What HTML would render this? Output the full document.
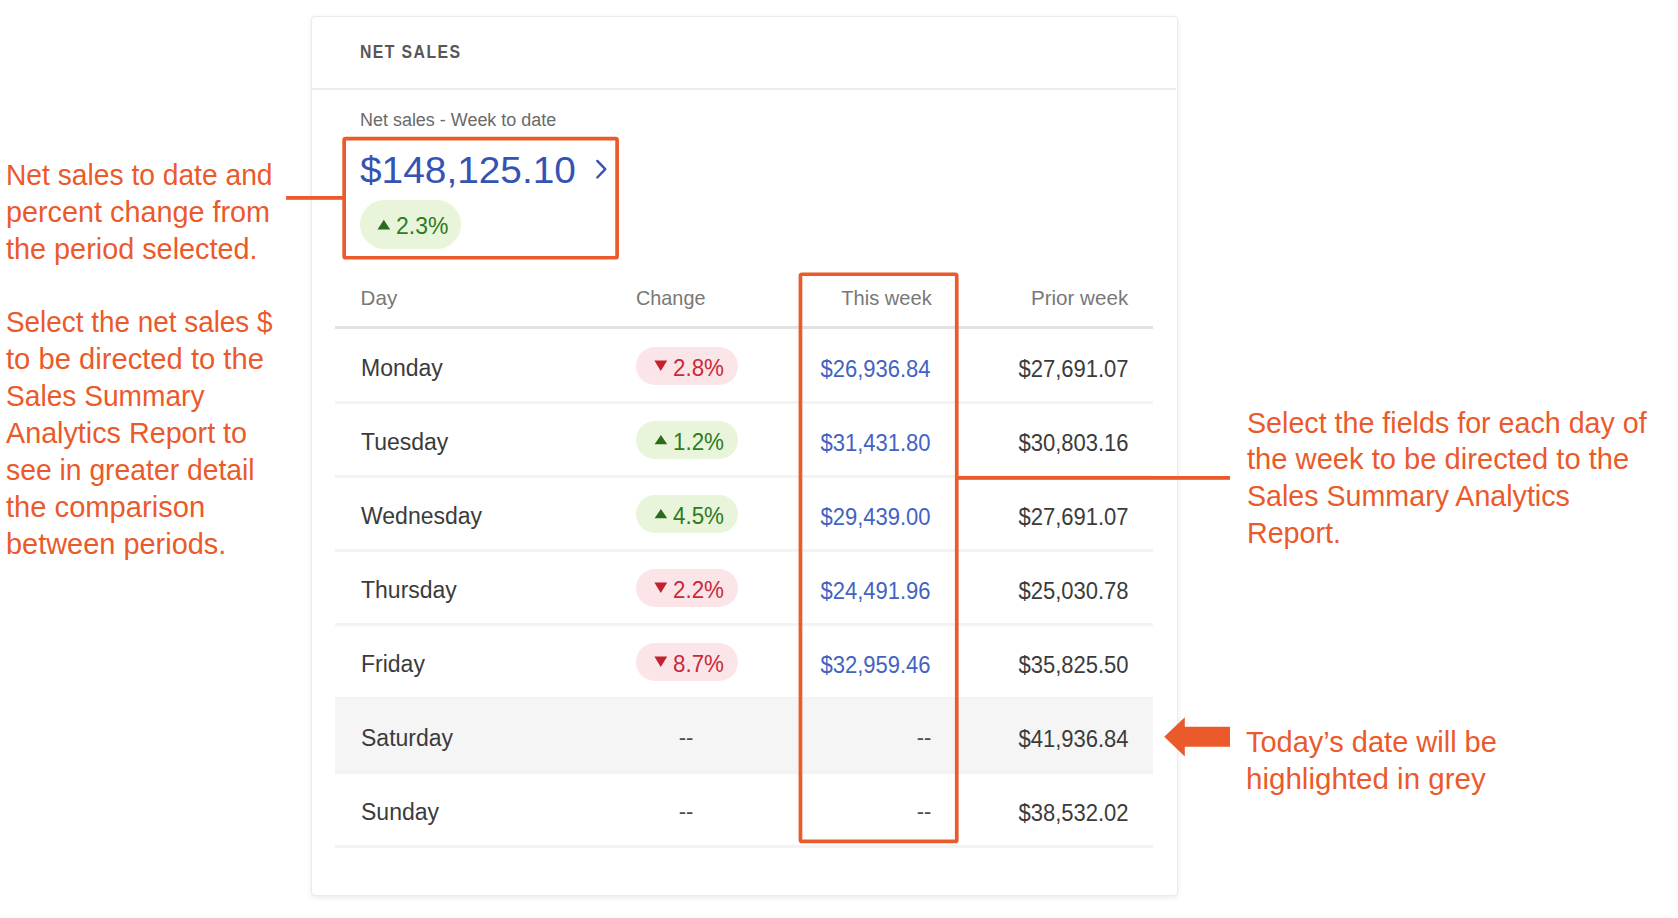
<!DOCTYPE html>
<html><head><meta charset="utf-8"><style>
html,body{margin:0;padding:0;background:#fff;}
body{width:1678px;height:918px;position:relative;overflow:hidden;font-family:"Liberation Sans",sans-serif;}
.t{position:absolute;white-space:nowrap;}
</style></head><body>
<div style="position:absolute;left:310.5px;top:15.5px;width:867px;height:880px;box-sizing:border-box;border:1px solid #ebebeb;border-radius:4px;background:#fff;box-shadow:0 1.5px 5px rgba(0,0,0,0.08);"></div>
<div style="position:absolute;left:312px;top:87.5px;width:864px;height:2px;background:#ececec;"></div>
<div class="t" style="top:42.31px;font-size:18px;line-height:20.106px;color:#575757;font-weight:700;letter-spacing:1.6px;left:359.60px;transform:scaleX(0.8780101951133765);transform-origin:0 0;">NET SALES</div>
<div class="t" style="top:109.61px;font-size:18px;line-height:20.106px;color:#6a6a6a;left:359.50px;transform:scaleX(0.997255260750229);transform-origin:0 0;">Net sales - Week to date</div>
<div class="t" style="top:149.64px;font-size:37.3px;line-height:41.664px;color:#3553b3;left:359.60px;transform:scaleX(1.0410438405307925);transform-origin:0 0;">$148,125.10</div>
<div style="position:absolute;left:359.5px;top:199.5px;width:101px;height:49.5px;background:#e9f5da;border-radius:25px;"></div>
<svg style="position:absolute;left:377px;top:219px" width="14" height="11" viewBox="0 0 14 11"><path d="M0.5 10.5 L6.8 0.8 L13.2 10.5 Z" fill="#2a6b1c"/></svg>
<div class="t" style="top:211.70px;font-size:24.2px;line-height:27.031px;color:#2f7a22;left:395.50px;transform:scaleX(0.9496882702624326);transform-origin:0 0;">2.3%</div>
<div class="t" style="top:286.46px;font-size:20.6px;line-height:23.010px;color:#787878;left:360.60px;">Day</div>
<div class="t" style="top:286.46px;font-size:20.6px;line-height:23.010px;color:#787878;left:635.50px;transform:scaleX(0.9625638823871584);transform-origin:0 0;">Change</div>
<div class="t" style="top:286.46px;font-size:20.6px;line-height:23.010px;color:#787878;right:746.20px;text-align:right;transform:scaleX(0.975);transform-origin:100% 0;">This week</div>
<div class="t" style="top:286.46px;font-size:20.6px;line-height:23.010px;color:#787878;right:549.80px;text-align:right;">Prior week</div>
<div style="position:absolute;left:335px;top:326px;width:818px;height:3px;background:#e2e2e2;"></div>
<div style="position:absolute;left:335px;top:401px;width:818px;height:3px;background:#f3f3f3;"></div>
<div class="t" style="top:355.99px;font-size:23px;line-height:25.691px;color:#3b3b3b;left:361.00px;">Monday</div>
<div style="position:absolute;left:636px;top:347.4px;width:102px;height:37.6px;background:#fbe5e8;border-radius:19px;"></div>
<svg style="position:absolute;left:654px;top:360px" width="14" height="12" viewBox="0 0 14 12"><path d="M0.4 0.6 L13.2 0.6 L6.8 10.9 Z" fill="#c4202e"/></svg>
<div class="t" style="top:354.51px;font-size:23.3px;line-height:26.026px;color:#c92a38;left:673.30px;transform:scaleX(0.9600180709283939);transform-origin:0 0;">2.8%</div>
<div class="t" style="top:355.71px;font-size:23.3px;line-height:26.026px;color:#4363c2;right:747.20px;text-align:right;transform:scaleX(0.945);transform-origin:100% 0;">$26,936.84</div>
<div class="t" style="top:355.71px;font-size:23.3px;line-height:26.026px;color:#3b3b3b;right:549.90px;text-align:right;transform:scaleX(0.945);transform-origin:100% 0;">$27,691.07</div>
<div style="position:absolute;left:335px;top:475px;width:818px;height:3px;background:#f3f3f3;"></div>
<div class="t" style="top:430.04px;font-size:23px;line-height:25.691px;color:#3b3b3b;left:361.00px;">Tuesday</div>
<div style="position:absolute;left:636px;top:421.4px;width:102px;height:37.6px;background:#e9f5da;border-radius:19px;"></div>
<svg style="position:absolute;left:654px;top:434px" width="14" height="12" viewBox="0 0 14 12"><path d="M0.6 10.3 L6.9 0.9 L13.2 10.3 Z" fill="#2a6b1c"/></svg>
<div class="t" style="top:428.56px;font-size:23.3px;line-height:26.026px;color:#2f7a22;left:673.30px;transform:scaleX(0.9600180709283939);transform-origin:0 0;">1.2%</div>
<div class="t" style="top:429.76px;font-size:23.3px;line-height:26.026px;color:#4363c2;right:747.20px;text-align:right;transform:scaleX(0.945);transform-origin:100% 0;">$31,431.80</div>
<div class="t" style="top:429.76px;font-size:23.3px;line-height:26.026px;color:#3b3b3b;right:549.90px;text-align:right;transform:scaleX(0.945);transform-origin:100% 0;">$30,803.16</div>
<div style="position:absolute;left:335px;top:549px;width:818px;height:3px;background:#f3f3f3;"></div>
<div class="t" style="top:504.08px;font-size:23px;line-height:25.691px;color:#3b3b3b;left:361.00px;">Wednesday</div>
<div style="position:absolute;left:636px;top:495.4px;width:102px;height:37.6px;background:#e9f5da;border-radius:19px;"></div>
<svg style="position:absolute;left:654px;top:508px" width="14" height="12" viewBox="0 0 14 12"><path d="M0.6 10.3 L6.9 0.9 L13.2 10.3 Z" fill="#2a6b1c"/></svg>
<div class="t" style="top:502.61px;font-size:23.3px;line-height:26.026px;color:#2f7a22;left:673.30px;transform:scaleX(0.9600180709283939);transform-origin:0 0;">4.5%</div>
<div class="t" style="top:503.81px;font-size:23.3px;line-height:26.026px;color:#4363c2;right:747.20px;text-align:right;transform:scaleX(0.945);transform-origin:100% 0;">$29,439.00</div>
<div class="t" style="top:503.81px;font-size:23.3px;line-height:26.026px;color:#3b3b3b;right:549.90px;text-align:right;transform:scaleX(0.945);transform-origin:100% 0;">$27,691.07</div>
<div style="position:absolute;left:335px;top:623px;width:818px;height:3px;background:#f3f3f3;"></div>
<div class="t" style="top:578.13px;font-size:23px;line-height:25.691px;color:#3b3b3b;left:361.00px;">Thursday</div>
<div style="position:absolute;left:636px;top:569.4px;width:102px;height:37.6px;background:#fbe5e8;border-radius:19px;"></div>
<svg style="position:absolute;left:654px;top:582px" width="14" height="12" viewBox="0 0 14 12"><path d="M0.4 0.6 L13.2 0.6 L6.8 10.9 Z" fill="#c4202e"/></svg>
<div class="t" style="top:576.66px;font-size:23.3px;line-height:26.026px;color:#c92a38;left:673.30px;transform:scaleX(0.9600180709283939);transform-origin:0 0;">2.2%</div>
<div class="t" style="top:577.86px;font-size:23.3px;line-height:26.026px;color:#4363c2;right:747.20px;text-align:right;transform:scaleX(0.945);transform-origin:100% 0;">$24,491.96</div>
<div class="t" style="top:577.86px;font-size:23.3px;line-height:26.026px;color:#3b3b3b;right:549.90px;text-align:right;transform:scaleX(0.945);transform-origin:100% 0;">$25,030.78</div>
<div style="position:absolute;left:335px;top:697px;width:818px;height:3px;background:#f3f3f3;"></div>
<div class="t" style="top:652.18px;font-size:23px;line-height:25.691px;color:#3b3b3b;left:361.00px;">Friday</div>
<div style="position:absolute;left:636px;top:643.4px;width:102px;height:37.6px;background:#fbe5e8;border-radius:19px;"></div>
<svg style="position:absolute;left:654px;top:656px" width="14" height="12" viewBox="0 0 14 12"><path d="M0.4 0.6 L13.2 0.6 L6.8 10.9 Z" fill="#c4202e"/></svg>
<div class="t" style="top:650.71px;font-size:23.3px;line-height:26.026px;color:#c92a38;left:673.30px;transform:scaleX(0.9600180709283939);transform-origin:0 0;">8.7%</div>
<div class="t" style="top:651.91px;font-size:23.3px;line-height:26.026px;color:#4363c2;right:747.20px;text-align:right;transform:scaleX(0.945);transform-origin:100% 0;">$32,959.46</div>
<div class="t" style="top:651.91px;font-size:23.3px;line-height:26.026px;color:#3b3b3b;right:549.90px;text-align:right;transform:scaleX(0.945);transform-origin:100% 0;">$35,825.50</div>
<div style="position:absolute;left:335px;top:698.5px;width:818px;height:74px;background:#f5f5f5;"></div>
<div style="position:absolute;left:335px;top:771px;width:818px;height:3px;background:#f3f3f3;"></div>
<div class="t" style="top:726.23px;font-size:23px;line-height:25.691px;color:#3b3b3b;left:361.00px;">Saturday</div>
<div class="t" style="top:725.94px;font-size:22px;line-height:24.574px;color:#4a4a4a;left:486.00px;width:400px;text-align:center;">--</div>
<div class="t" style="top:725.94px;font-size:22px;line-height:24.574px;color:#4a4a4a;right:746.70px;text-align:right;">--</div>
<div class="t" style="top:725.96px;font-size:23.3px;line-height:26.026px;color:#3b3b3b;right:549.90px;text-align:right;transform:scaleX(0.945);transform-origin:100% 0;">$41,936.84</div>
<div style="position:absolute;left:335px;top:845px;width:818px;height:3px;background:#f3f3f3;"></div>
<div class="t" style="top:800.28px;font-size:23px;line-height:25.691px;color:#3b3b3b;left:361.00px;">Sunday</div>
<div class="t" style="top:799.99px;font-size:22px;line-height:24.574px;color:#4a4a4a;left:486.00px;width:400px;text-align:center;">--</div>
<div class="t" style="top:799.99px;font-size:22px;line-height:24.574px;color:#4a4a4a;right:746.70px;text-align:right;">--</div>
<div class="t" style="top:800.01px;font-size:23.3px;line-height:26.026px;color:#3b3b3b;right:549.90px;text-align:right;transform:scaleX(0.945);transform-origin:100% 0;">$38,532.02</div>
<svg style="position:absolute;left:0;top:0" width="1678" height="918" viewBox="0 0 1678 918">
<path d="M597.3 160.9 L605.3 169.2 L597.3 177.5" fill="none" stroke="#3553b3" stroke-width="2.4" stroke-linecap="round" stroke-linejoin="round"/>
<rect x="344.15" y="138.65" width="272.95" height="119.1" rx="1.5" fill="none" stroke="#ea5a2b" stroke-width="3.7"/>
<rect x="800.45" y="274.25" width="156.3" height="567.2" rx="1.5" fill="none" stroke="#ea5a2b" stroke-width="3.7"/>
<rect x="286.1" y="196" width="57" height="3.8" fill="#ea5a2b"/>
<rect x="957" y="476" width="273" height="3.8" fill="#ea5a2b"/>
<path d="M1164.2 736.8 L1184.8 717.2 L1184.8 726.8 L1230 726.8 L1230 746.8 L1184.8 746.8 L1184.8 756.6 Z" fill="#ea5a2b"/>
</svg>
<div class="t" style="top:158.69px;font-size:29.4px;line-height:32.840px;color:#ea5a2b;left:6.00px;transform:scaleX(0.9595795990353815);transform-origin:0 0;">Net sales to date and</div>
<div class="t" style="top:195.64px;font-size:29.4px;line-height:32.840px;color:#ea5a2b;left:6.00px;transform:scaleX(0.979235751007055);transform-origin:0 0;">percent change from</div>
<div class="t" style="top:232.59px;font-size:29.4px;line-height:32.840px;color:#ea5a2b;left:6.00px;transform:scaleX(0.9806671809617318);transform-origin:0 0;">the period selected.</div>
<div class="t" style="top:306.49px;font-size:29.4px;line-height:32.840px;color:#ea5a2b;left:6.00px;transform:scaleX(0.948538411180372);transform-origin:0 0;">Select the net sales $</div>
<div class="t" style="top:343.44px;font-size:29.4px;line-height:32.840px;color:#ea5a2b;left:6.00px;transform:scaleX(0.9927047742173795);transform-origin:0 0;">to be directed to the</div>
<div class="t" style="top:380.39px;font-size:29.4px;line-height:32.840px;color:#ea5a2b;left:6.00px;transform:scaleX(0.9568133202289416);transform-origin:0 0;">Sales Summary</div>
<div class="t" style="top:417.34px;font-size:29.4px;line-height:32.840px;color:#ea5a2b;left:6.00px;transform:scaleX(0.9772580860813652);transform-origin:0 0;">Analytics Report to</div>
<div class="t" style="top:454.29px;font-size:29.4px;line-height:32.840px;color:#ea5a2b;left:6.00px;transform:scaleX(0.962912199598109);transform-origin:0 0;">see in greater detail</div>
<div class="t" style="top:491.24px;font-size:29.4px;line-height:32.840px;color:#ea5a2b;left:6.00px;transform:scaleX(0.9907986603566079);transform-origin:0 0;">the comparison</div>
<div class="t" style="top:528.19px;font-size:29.4px;line-height:32.840px;color:#ea5a2b;left:6.00px;transform:scaleX(0.9844515613205231);transform-origin:0 0;">between periods.</div>
<div class="t" style="top:406.69px;font-size:29.4px;line-height:32.840px;color:#ea5a2b;left:1246.50px;transform:scaleX(0.9747073318757817);transform-origin:0 0;">Select the fields for each day of</div>
<div class="t" style="top:443.49px;font-size:29.4px;line-height:32.840px;color:#ea5a2b;left:1246.50px;transform:scaleX(0.9913721586195458);transform-origin:0 0;">the week to be directed to the</div>
<div class="t" style="top:480.29px;font-size:29.4px;line-height:32.840px;color:#ea5a2b;left:1246.50px;transform:scaleX(0.9736696096878472);transform-origin:0 0;">Sales Summary Analytics</div>
<div class="t" style="top:517.09px;font-size:29.4px;line-height:32.840px;color:#ea5a2b;left:1246.50px;transform:scaleX(0.974780155964825);transform-origin:0 0;">Report.</div>
<div class="t" style="top:725.79px;font-size:29.4px;line-height:32.840px;color:#ea5a2b;left:1245.50px;transform:scaleX(0.9864142075085379);transform-origin:0 0;">Today&#8217;s date will be</div>
<div class="t" style="top:762.59px;font-size:29.4px;line-height:32.840px;color:#ea5a2b;left:1245.50px;transform:scaleX(1.0051093758513878);transform-origin:0 0;">highlighted in grey</div>
</body></html>
